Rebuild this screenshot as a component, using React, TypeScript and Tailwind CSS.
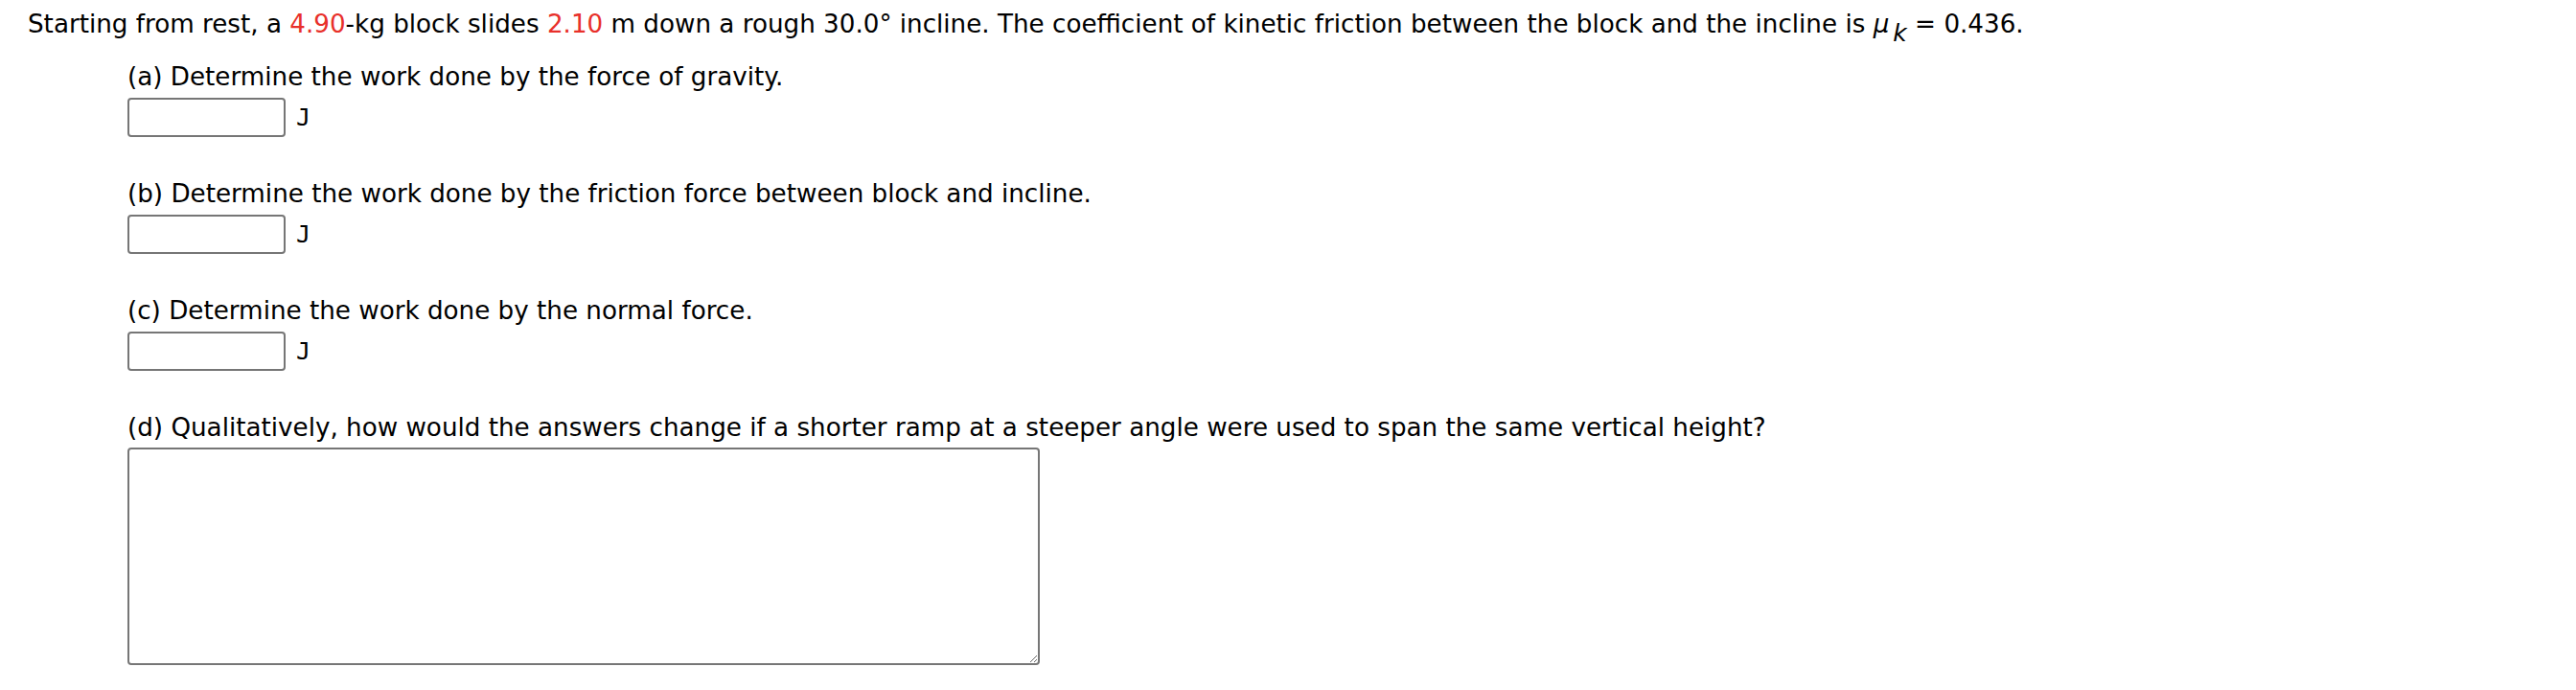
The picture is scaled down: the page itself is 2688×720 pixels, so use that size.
export default function App() {
  const red = 'text-[#e8302a]';

  return (
    <div className="min-h-[720px] bg-white pl-[29px] pt-[10px] font-['DejaVu_Sans',sans-serif] text-[26.2px] leading-[31px] text-black">
      {/* Problem statement */}
      <p>
        Starting from rest, a <span className={red}>4.90</span>-kg block slides{' '}
        <span className={red}>2.10</span> m down a rough 30.0° incline. The coefficient of kinetic
        friction between the block and the incline is <i>μ</i>
        <sub className="relative top-[9px] ml-[4px] align-baseline text-[25px] italic">k</sub> = 0.436.
      </p>

      <div className="ml-[104px]">
        {/* (a) */}
        <div className="mt-[24px]">(a) Determine the work done by the force of gravity.</div>
        <div className="mt-[6px] flex items-center gap-[11px]">
          <input className="h-[41px] w-[165px] rounded-[4px] border-2 border-[#767676] bg-white" />
          <span className="font-['DejaVu_Sans_Mono',monospace] text-[25px]">J</span>
        </div>

        {/* (b) */}
        <div className="mt-[44px]">(b) Determine the work done by the friction force between block and incline.</div>
        <div className="mt-[6px] flex items-center gap-[11px]">
          <input className="h-[41px] w-[165px] rounded-[4px] border-2 border-[#767676] bg-white" />
          <span className="font-['DejaVu_Sans_Mono',monospace] text-[25px]">J</span>
        </div>

        {/* (c) */}
        <div className="mt-[44px]">(c) Determine the work done by the normal force.</div>
        <div className="mt-[6px] flex items-center gap-[11px]">
          <input className="h-[41px] w-[165px] rounded-[4px] border-2 border-[#767676] bg-white" />
          <span className="font-['DejaVu_Sans_Mono',monospace] text-[25px]">J</span>
        </div>

        {/* (d) */}
        <div className="mt-[44px]">
          (d) Qualitatively, how would the answers change if a shorter ramp at a steeper angle were used to span the same vertical height?
        </div>
        <textarea className="mt-[5px] block h-[227px] w-[952px] rounded-[4px] border-2 border-[#767676] bg-white" />
      </div>
    </div>
  );
}
